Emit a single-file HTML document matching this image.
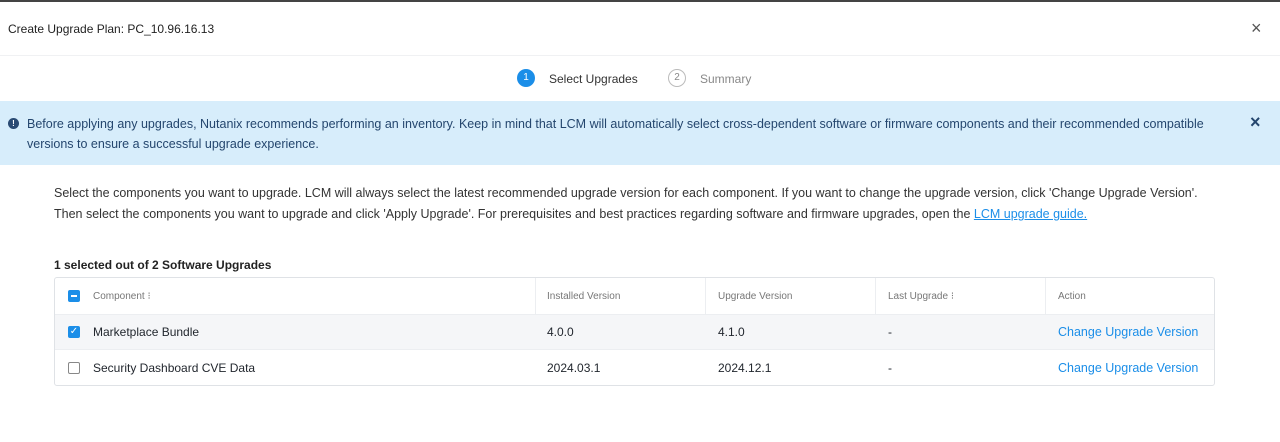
<!DOCTYPE html>
<html><head><style>
*{margin:0;padding:0;box-sizing:border-box}
body{width:1280px;height:442px;background:#fff;font-family:"Liberation Sans",sans-serif;color:#22272e;position:relative;overflow:hidden}
.a{position:absolute;white-space:nowrap}
</style></head><body>
<div class="a" style="left:0;top:0;width:1280px;height:2px;background:#444"></div>
<div class="a" style="left:8px;top:22px;font-size:12px;color:#222">Create Upgrade Plan: PC_10.96.16.13</div>
<div class="a" style="left:1251px;top:18px;font-size:18px;color:#555">×</div>
<div class="a" style="left:0;top:55px;width:1280px;height:1px;background:#f0f1f3"></div>
<div class="a" style="left:517px;top:69px;width:18px;height:18px;border-radius:50%;background:#1b8ee8;color:#fff;font-size:10px;text-align:center;line-height:18px">1</div>
<div class="a" style="left:549px;top:72px;font-size:12px;color:#333">Select Upgrades</div>
<div class="a" style="left:668px;top:69px;width:18px;height:18px;border-radius:50%;border:1px solid #bbb;color:#888;font-size:10px;text-align:center;line-height:16px">2</div>
<div class="a" style="left:700px;top:72px;font-size:12px;color:#888">Summary</div>
<div class="a" style="left:0;top:101px;width:1280px;height:64px;background:#d7edfb"></div>
<div class="a" style="left:8px;top:118px;width:11px;height:11px;border-radius:50%;background:#2a4a73;color:#fff;font-size:8px;font-weight:bold;text-align:center;line-height:11px">!</div>
<div class="a" style="left:27px;top:114px;font-size:12.5px;color:#24466e;line-height:20px">Before applying any upgrades, Nutanix recommends performing an inventory. Keep in mind that LCM will automatically select cross-dependent software or firmware components and their recommended compatible<br>versions to ensure a successful upgrade experience.</div>
<div class="a" style="left:1250px;top:112px;font-size:18px;color:#24466e;font-weight:bold">×</div>
<div class="a" style="left:54px;top:183px;font-size:12.5px;color:#333;line-height:21px">Select the components you want to upgrade. LCM will always select the latest recommended upgrade version for each component. If you want to change the upgrade version, click 'Change Upgrade Version'.<br>Then select the components you want to upgrade and click 'Apply Upgrade'. For prerequisites and best practices regarding software and firmware upgrades, open the <span style="color:#1b8ee8;text-decoration:underline">LCM upgrade guide.</span></div>
<div class="a" style="left:54px;top:258px;font-size:12px;font-weight:bold;color:#222">1 selected out of 2 Software Upgrades</div>
<div class="a" style="left:54px;top:277px;width:1161px;height:109px;border:1px solid #dfe2e6;border-radius:3px;overflow:hidden">
 <div class="a" style="left:0;top:36px;width:1161px;height:36px;background:#f5f6f8;border-top:1px solid #eceef1;border-bottom:1px solid #eceef1"></div>
 <div class="a" style="left:480px;top:0;width:1px;height:36px;background:#eceef1"></div>
 <div class="a" style="left:650px;top:0;width:1px;height:36px;background:#eceef1"></div>
 <div class="a" style="left:820px;top:0;width:1px;height:36px;background:#eceef1"></div>
 <div class="a" style="left:990px;top:0;width:1px;height:36px;background:#eceef1"></div>
 <div class="a" style="left:13px;top:12px;width:12px;height:12px;border-radius:2px;background:#1b8ee8"><div style="margin:5px 3px 0;height:2px;background:#fff"></div></div>
 <div class="a" style="left:38px;top:13px;font-size:10px;color:#777">Component ⁝</div>
 <div class="a" style="left:492px;top:13px;font-size:10px;color:#777">Installed Version</div>
 <div class="a" style="left:663px;top:13px;font-size:10px;color:#777">Upgrade Version</div>
 <div class="a" style="left:833px;top:13px;font-size:10px;color:#777">Last Upgrade ⁝</div>
 <div class="a" style="left:1003px;top:13px;font-size:10px;color:#777">Action</div>
 <div class="a" style="left:13px;top:48px;width:12px;height:12px;border-radius:2px;background:#1b8ee8;color:#fff;font-size:10px;line-height:12px;text-align:center">✓</div>
 <div class="a" style="left:38px;top:47px;font-size:12px">Marketplace Bundle</div>
 <div class="a" style="left:492px;top:47px;font-size:12px">4.0.0</div>
 <div class="a" style="left:663px;top:47px;font-size:12px">4.1.0</div>
 <div class="a" style="left:833px;top:47px;font-size:12px">-</div>
 <div class="a" style="left:1003px;top:47px;font-size:12.5px;color:#1b8ee8">Change Upgrade Version</div>
 <div class="a" style="left:13px;top:84px;width:12px;height:12px;border-radius:2px;border:1px solid #888"></div>
 <div class="a" style="left:38px;top:83px;font-size:12px">Security Dashboard CVE Data</div>
 <div class="a" style="left:492px;top:83px;font-size:12px">2024.03.1</div>
 <div class="a" style="left:663px;top:83px;font-size:12px">2024.12.1</div>
 <div class="a" style="left:833px;top:83px;font-size:12px">-</div>
 <div class="a" style="left:1003px;top:83px;font-size:12.5px;color:#1b8ee8">Change Upgrade Version</div>
</div>
</body></html>
